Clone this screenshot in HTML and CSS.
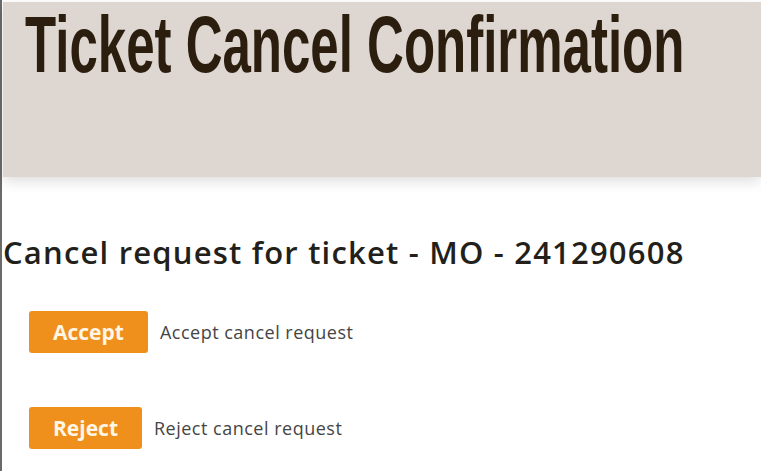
FILE: index.html
```html
<!DOCTYPE html>
<html lang="en">
<head>
<meta charset="utf-8">
<title>Ticket Cancel Confirmation</title>
<link rel="stylesheet" href="styles.css">
</head>
<body>
<div class="page">
  <header class="banner">
    <h1 class="banner-title"><span class="banner-text">Ticket Cancel Confirmation</span></h1>
  </header>
  <main class="content">
    <h2 class="request-title">Cancel request for ticket - MO - 241290608</h2>
    <div class="actions">
      <div class="action-row">
        <button class="btn" type="button">Accept</button>
        <span class="action-label">Accept cancel request</span>
      </div>
      <div class="action-row">
        <button class="btn" type="button">Reject</button>
        <span class="action-label">Reject cancel request</span>
      </div>
    </div>
  </main>
</div>
</body>
</html>
```

FILE: styles.css
```css
html, body {
  margin: 0;
  padding: 0;
  background: #ffffff;
}

.page {
  min-height: 100vh;
  border-left: 2px solid #6a6a6a;
  padding-left: 1px;
  padding-top: 2px;
  box-sizing: border-box;
  font-family: "Open Sans", "Liberation Sans", sans-serif;
}

.banner {
  height: 175px;
  background: #ded6d0;
  box-shadow: 0 5px 12px rgba(0, 0, 0, 0.12);
  padding-left: 22px;
  box-sizing: border-box;
}

.banner-title {
  margin: 0;
  padding-top: 3px;
  height: 84px;
  font-family: "Liberation Sans", Arial, sans-serif;
  font-weight: 700;
  font-size: 51px;
  line-height: 51px;
  color: #2b1e0e;
  white-space: nowrap;
}

.banner-text {
  display: block;
  width: max-content;
  transform: scaleY(1.56);
  transform-origin: left top;
}

.content {
  padding-top: 57px;
}

.request-title {
  margin: 0;
  font-size: 31px;
  line-height: 36px;
  font-weight: 600;
  letter-spacing: 1.2px;
  color: #231f1a;
}

.actions {
  margin-top: 41px;
  padding-left: 26px;
  display: flex;
  flex-direction: column;
  gap: 54px;
}

.action-row {
  display: flex;
  align-items: center;
  gap: 12px;
}

.btn {
  height: 42px;
  padding: 0 24px;
  border: none;
  border-radius: 3px;
  background: #f0901c;
  color: #fff6e6;
  font-family: "Open Sans", "Liberation Sans", sans-serif;
  font-weight: 700;
  font-size: 21px;
  cursor: pointer;
}

.action-label {
  font-size: 18px;
  letter-spacing: 0.5px;
  color: #454545;
}
```
